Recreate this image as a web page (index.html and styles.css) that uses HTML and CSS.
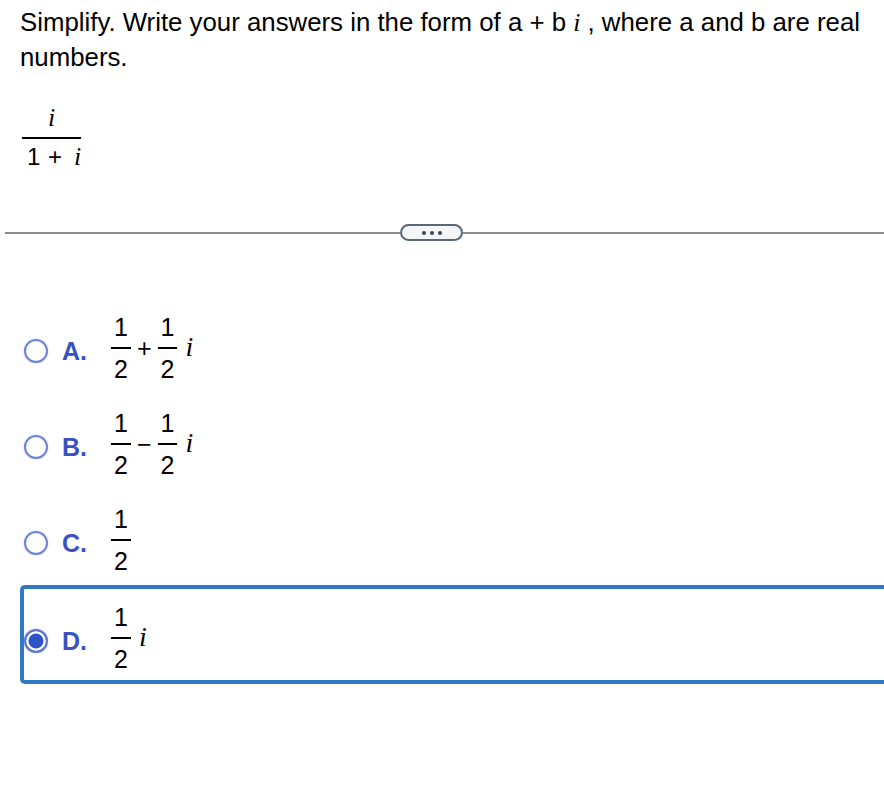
FILE: index.html
```html
<!DOCTYPE html>
<html>
<head>
<meta charset="utf-8">
<link rel="stylesheet" href="styles.css">
</head>
<body>
<div class="page">
  <p class="prompt">Simplify. Write your answers in the form of a + b <i class="iv">i</i> , where a and b are real numbers.</p>
  <div class="expr">
    <span class="frac big"><span class="num"><i class="iv">i</i></span><span class="den">1 +&ensp;<i class="iv">i</i></span></span>
  </div>
  <div class="sep">
    <span class="line left"></span>
    <span class="pill"><span class="dot"></span><span class="dot"></span><span class="dot"></span></span>
    <span class="line right"></span>
  </div>
  <div class="opts">
    <div class="opt">
      <span class="radio"></span><span class="letter">A.</span>
      <span class="math"><span class="frac sm"><span class="num">1</span><span class="den">2</span></span><span class="op">+</span><span class="frac sm"><span class="num">1</span><span class="den">2</span></span><i class="iv im">i</i></span>
    </div>
    <div class="opt">
      <span class="radio"></span><span class="letter">B.</span>
      <span class="math"><span class="frac sm"><span class="num">1</span><span class="den">2</span></span><span class="op">−</span><span class="frac sm"><span class="num">1</span><span class="den">2</span></span><i class="iv im">i</i></span>
    </div>
    <div class="opt">
      <span class="radio"></span><span class="letter">C.</span>
      <span class="math"><span class="frac sm"><span class="num">1</span><span class="den">2</span></span></span>
    </div>
    <div class="opt sel">
      <span class="radio on"></span><span class="letter">D.</span>
      <span class="math"><span class="frac sm"><span class="num">1</span><span class="den">2</span></span><i class="iv im">i</i></span>
    </div>
  </div>
</div>
</body>
</html>
```
FILE: styles.css
```css
html, body {
  margin: 0;
  padding: 0;
  background: #fff;
  overflow: hidden;
}
body {
  font-family: "Liberation Sans", Arial, sans-serif;
  color: #000;
}
.prompt {
  margin: 0;
  padding: 5px 12px 0 20px;
  font-size: 25.8px;
  line-height: 35px;
}
.iv {
  font-family: "Liberation Serif", "Times New Roman", serif;
  font-style: italic;
}
.expr {
  margin-top: 29px;
  padding-left: 22px;
}
.frac {
  display: inline-flex;
  flex-direction: column;
  text-align: center;
  vertical-align: middle;
}
.big .num {
  font-size: 26px;
  line-height: 26px;
  padding-bottom: 6px;
  border-bottom: 2px solid #000;
}
.big .den {
  font-size: 24px;
  line-height: 26px;
  padding: 5px 0 0 5px;
  word-spacing: 1px;
}
.big .den .iv {
  font-size: 26px;
}
.sep {
  display: flex;
  align-items: center;
  margin-top: 54px;
  padding-left: 5px;
}
.line {
  height: 2px;
  background: #878e99;
}
.line.left {
  width: 395px;
}
.line.right {
  flex: 1;
}
.pill {
  width: 63px;
  height: 17px;
  box-sizing: border-box;
  border: 2px solid #5b6776;
  border-radius: 9px;
  background: #f3f5f7;
  display: flex;
  align-items: center;
  justify-content: center;
  gap: 4px;
}
.dot {
  width: 4px;
  height: 4px;
  border-radius: 50%;
  background: #3d4652;
}
.opts {
  margin-top: 56px;
}
.opt {
  display: flex;
  align-items: center;
  height: 96px;
  box-sizing: border-box;
  padding-top: 6px;
  margin-left: 20px;
  margin-right: -40px;
  border: 4px solid transparent;
  border-right: none;
  border-radius: 5px 0 0 5px;
}
.opt.sel {
  height: 99px;
  border-color: #3279c5;
}
.radio {
  width: 24px;
  height: 24px;
  box-sizing: border-box;
  border-radius: 50%;
  border: 2.5px solid #6a84d8;
  box-shadow: 0 0 1.5px rgba(93, 121, 212, 0.6);
  margin-top: 6px;
  flex: none;
}
.radio.on {
  border-color: #5d79d4;
  background: #2f53c9;
  box-shadow: inset 0 0 0 2.5px #fff, 0 0 1.5px rgba(93, 121, 212, 0.6);
}
.letter {
  font-weight: bold;
  color: #3853c1;
  font-size: 25px;
  line-height: 28px;
  margin: 6px 24px 0 14px;
}
.math {
  display: flex;
  align-items: center;
  font-size: 24px;
}
.sm .num {
  font-size: 25px;
  line-height: 28px;
  padding: 0 3px 6px;
  border-bottom: 2px solid #000;
}
.sm .den {
  font-size: 25px;
  line-height: 28px;
  padding-top: 6px;
}
.op {
  margin: 0 6px;
  font-size: 25px;
  line-height: 28px;
}
.im {
  font-size: 28px;
  line-height: 28px;
  margin-left: 8px;
  margin-top: -2px;
}
```
